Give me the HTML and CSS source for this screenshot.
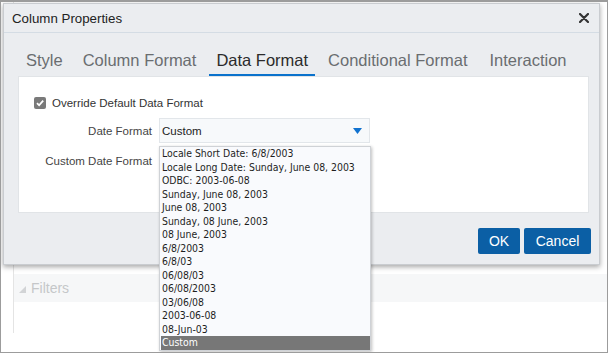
FILE: index.html
```html
<!DOCTYPE html>
<html>
<head>
<meta charset="utf-8">
<link rel="stylesheet" href="styles.css">
</head>
<body>
<div class="screen">
  <div class="page">
    <div class="panel">
      <div class="filters"><span class="tri"></span><span>Filters</span></div>
    </div>
  </div>

  <div class="dialog">
    <div class="dlg-header">
      <span class="dlg-title">Column Properties</span>
      <svg class="close" width="10" height="10" viewBox="0 0 10 10"><path d="M1 1L9 9M9 1L1 9" stroke="#333" stroke-width="2.2" stroke-linecap="round"/></svg>
    </div>
    <div class="tabs">
      <span class="tab">Style</span>
      <span class="tab">Column Format</span>
      <span class="tab active">Data Format</span>
      <span class="tab">Conditional Format</span>
      <span class="tab">Interaction</span>
    </div>
    <div class="content">
      <div class="check-row">
        <span class="checkbox"><svg width="12" height="12" viewBox="0 0 12 12"><path d="M3 6.2L5.1 8.3L9.2 3.6" fill="none" stroke="#fff" stroke-width="1.8"/></svg></span>
        <span>Override Default Data Format</span>
      </div>
      <div class="form-row">
        <span class="label">Date Format</span>
        <div class="select">
          <span>Custom</span>
          <svg width="9" height="6" viewBox="0 0 9 6"><path d="M0 0H9L4.5 6Z" fill="#1172cf"/></svg>
        </div>
      </div>
      <div class="form-row row2">
        <span class="label">Custom Date Format</span>
      </div>
    </div>
    <div class="buttons">
      <button class="btn ok">OK</button>
      <button class="btn cancel">Cancel</button>
    </div>
  </div>

  <ul class="listbox">
    <li>Locale Short Date: 6/8/2003</li>
    <li>Locale Long Date: Sunday, June 08, 2003</li>
    <li>ODBC: 2003-06-08</li>
    <li>Sunday, June 08, 2003</li>
    <li>June 08, 2003</li>
    <li>Sunday, 08 June, 2003</li>
    <li>08 June, 2003</li>
    <li>6/8/2003</li>
    <li>6/8/03</li>
    <li>06/08/03</li>
    <li>06/08/2003</li>
    <li>03/06/08</li>
    <li>2003-06-08</li>
    <li>08-Jun-03</li>
    <li class="sel">Custom</li>
  </ul>
</div>
</body>
</html>
```

FILE: styles.css
```css
* { box-sizing: border-box; }
html, body { margin: 0; padding: 0; background: #fff; }
body { font-family: "Liberation Sans", Arial, sans-serif; color: #333; }

.screen {
  position: relative;
  width: 608px;
  height: 353px;
  border: 1px solid #9c9c9c;
  border-top: 2px solid #9c9c9c;
  overflow: hidden;
  background: #fff;
}

.page { padding-left: 12px; height: 100%; }
.panel {
  border-left: 1px solid #e4e4e4;
  height: 331px;
  padding-top: 272px;
}
.filters {
  height: 28px;
  background: #f6f7f8;
  display: flex;
  align-items: center;
  padding-left: 5px;
  gap: 5px;
  font-size: 14px;
  color: #c5c7c9;
}
.tri {
  width: 0; height: 0;
  border-left: 7px solid transparent;
  border-bottom: 7px solid #d2d4d6;
  margin-top: 3px;
}

.dialog {
  position: absolute;
  left: 2px;
  top: 1px;
  width: 597px;
  height: 262px;
  background: #ebedf0;
  box-shadow: 0 2px 5px rgba(0,0,0,0.35);
  border: 1px solid #c9ccd0;
}
.dlg-header {
  height: 29px;
  border-bottom: 1px solid #d4dce4;
  display: flex;
  align-items: center;
  justify-content: space-between;
  padding: 0 10px 0 8px;
}
.dlg-title { font-size: 13.3px; color: #222; }
.close { display: block; }

.tabs {
  display: flex;
  gap: 6px;
  padding-left: 15px;
  height: 43px;
  align-items: flex-end;
}
.tab {
  font-size: 16.5px;
  color: #6a6d70;
  padding: 0 7px 4px;
  border-bottom: 2px solid transparent;
  white-space: nowrap;
}
.tab:last-child { margin-left: 2px; }
.tab.active { color: #2b2b2b; border-bottom-color: #0a72cc; }

.content {
  margin-left: 14px;
  width: 571px;
  height: 137px;
  background: #fff;
  border: 1px solid #e1e4e7;
  padding: 19px 0 0 15px;
  font-size: 11.5px;
}
.check-row { display: flex; align-items: center; gap: 6px; height: 14px; }
.checkbox {
  width: 12px; height: 12px;
  background: #7a7a7a;
  border-radius: 2px;
  display: flex;
}
.form-row {
  display: flex;
  align-items: center;
  margin-top: 8px;
  margin-left: -16px;
}
.label {
  width: 134px;
  text-align: right;
  color: #444;
  margin-right: 7px;
}
.select {
  width: 211px;
  height: 25px;
  background: #f7f9fb;
  border: 1px solid #e2e6ea;
  display: flex;
  align-items: center;
  justify-content: space-between;
  padding: 0 7px 0 2px;
  color: #222;
}
.row2 { margin-top: 10px; height: 16px; }

.buttons {
  display: flex;
  justify-content: flex-end;
  gap: 4px;
  margin-top: 15px;
  padding-right: 8px;
}
.btn {
  height: 26px;
  border: none;
  border-radius: 2px;
  background: #0b5fa5;
  color: #fff;
  font-family: "Liberation Sans", Arial, sans-serif;
  font-size: 14px;
  padding: 0;
}
.ok { width: 42px; }
.cancel { width: 67px; }

.listbox {
  position: absolute;
  left: 158px;
  top: 144px;
  width: 212px;
  margin: 0;
  padding: 0 0 0 1px;
  list-style: none;
  background: #f9fafd;
  border: 1px solid #cfd2d6;
  box-shadow: 1px 1px 3px rgba(0,0,0,0.25);
  font-family: "DejaVu Sans Condensed", "DejaVu Sans", sans-serif;
  font-size: 10.4px;
  color: #1e1e1e;
}
.listbox li { height: 13.5px; line-height: 13.5px; padding-left: 1px; white-space: nowrap; }
.listbox li.sel { background: #777; color: #fff; }
```
